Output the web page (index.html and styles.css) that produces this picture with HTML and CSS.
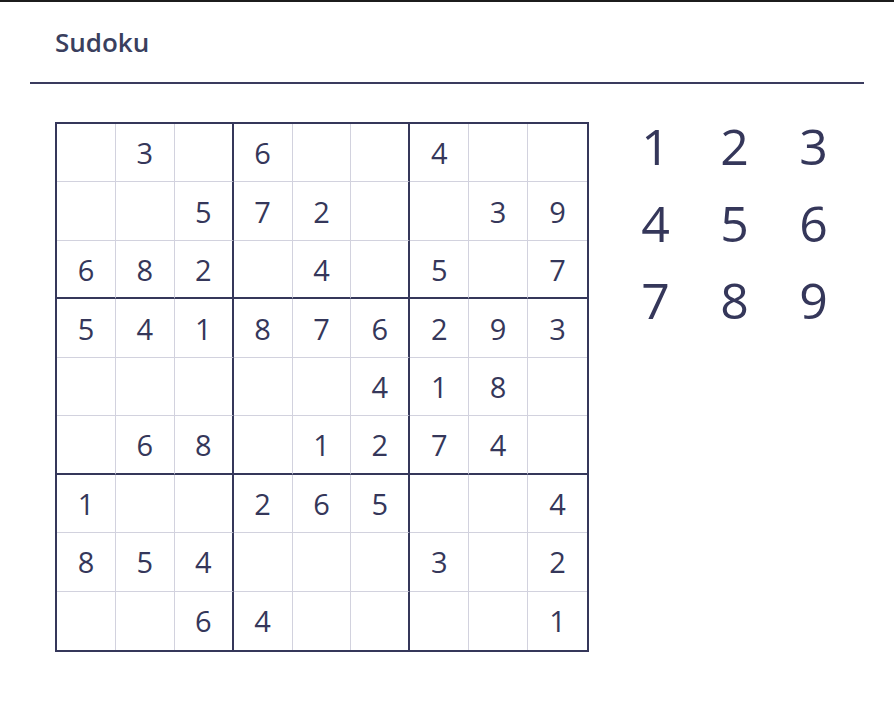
FILE: index.html
```html
<!DOCTYPE html>
<html lang="en">
<head>
  <meta charset="UTF-8">
  <title>Sudoku</title>
  <link rel="stylesheet" href="styles.css">
</head>
<body>
  <header class="header">
    <h1 class="title">Sudoku</h1>
  </header>

  <main class="game">
    <div class="board" id="board"></div>

    <div class="numpad">
      <button class="num">1</button>
      <button class="num">2</button>
      <button class="num">3</button>
      <button class="num">4</button>
      <button class="num">5</button>
      <button class="num">6</button>
      <button class="num">7</button>
      <button class="num">8</button>
      <button class="num">9</button>
    </div>
  </main>

  <script>
    const puzzle = [
      "030600400",
      "005720039",
      "682040507",
      "541876293",
      "000004180",
      "068012740",
      "100265004",
      "854000302",
      "006400001"
    ];

    const board = document.getElementById("board");

    puzzle.forEach((row, r) => {
      row.split("").forEach((val, c) => {
        const cell = document.createElement("div");
        cell.className = "cell";
        if (c === 2 || c === 5) cell.classList.add("box-right");
        if (c === 8) cell.classList.add("last-col");
        if (r === 2 || r === 5) cell.classList.add("box-bottom");
        if (r === 8) cell.classList.add("last-row");
        cell.textContent = val === "0" ? "" : val;
        board.appendChild(cell);
      });
    });
  </script>
</body>
</html>
```

FILE: styles.css
```css
body {
  margin: 0;
  font-family: "Open Sans", "Noto Sans", sans-serif;
  color: #35375a;
  background: #fff;
  border-top: 2px solid #1c1c1c;
}

.header {
  margin: 0 30px;
  height: 80px;
  padding-left: 25px;
  display: flex;
  align-items: center;
  border-bottom: 2px solid #3a3b5e;
}

.title {
  margin: 0;
  font-size: 26px;
  font-weight: 600;
  color: #3a3f5e;
}

.game {
  display: flex;
  align-items: flex-start;
  gap: 27px;
  padding: 38px 55px;
}

.board {
  flex-shrink: 0;
  width: 534px;
  height: 530px;
  box-sizing: border-box;
  border: 2px solid #35375a;
  display: grid;
  grid-template-columns: repeat(9, 1fr);
  grid-template-rows: repeat(9, 1fr);
}

.cell {
  border-right: 1px solid #d2d2de;
  border-bottom: 1px solid #d2d2de;
  display: flex;
  align-items: center;
  justify-content: center;
  font-size: 29px;
}

.cell.box-right {
  border-right: 2px solid #35375a;
}

.cell.box-bottom {
  border-bottom: 2px solid #35375a;
}

.cell.last-col {
  border-right: none;
}

.cell.last-row {
  border-bottom: none;
}

.numpad {
  flex-shrink: 0;
  display: grid;
  grid-template-columns: repeat(3, 79px);
  grid-auto-rows: 77px;
  margin-top: -15px;
}

.num {
  border: none;
  background: transparent;
  font-family: inherit;
  font-size: 50px;
  color: #35375a;
  padding: 0;
  cursor: pointer;
}
```
